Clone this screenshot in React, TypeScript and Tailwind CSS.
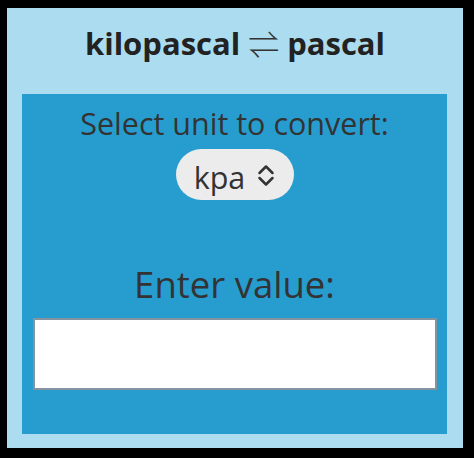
import React, { useState } from "react";

const font = { fontFamily: '"Open Sans", "Noto Sans", sans-serif' };

const Chevrons = () => (
  <svg width="18" height="23" viewBox="0 0 18 23" fill="none" stroke="#333" strokeWidth="2.5" strokeLinecap="round" strokeLinejoin="round">
    <path d="M2.5 9 9 2.5 15.5 9" />
    <path d="M2.5 14 9 20.5 15.5 14" />
  </svg>
);

export default function App() {
  const [value, setValue] = useState("");

  return (
    <div className="w-[474px] h-[458px] bg-black pt-[8px] pl-[7px]" style={font}>
      <div className="w-[456px] h-[440px] bg-[#acdcf0] flex flex-col">
        <h1 className="h-[86px] pt-[14px] flex justify-center text-[31px] leading-[42px] font-bold text-[#222]">
          kilopascal
          <span className="mx-[8px] font-light text-[#333] font-['Noto_Sans_CJK_JP',sans-serif]">⇌</span>
          pascal
        </h1>
        <div className="ml-[15px] w-[425px] h-[340px] bg-[#279dcf] flex flex-col items-center text-[#333]">
          <p className="mt-[9px] text-[30.5px] leading-[40px]">Select unit to convert:</p>
          <div className="mt-[6px] h-[51px] w-[118px] rounded-full bg-[#ececec] flex items-center justify-center gap-[12px] text-[30.5px] leading-[40px]">
            <span className="pt-[5px]">kpa</span>
            <span className="pt-[2px]">
              <Chevrons />
            </span>
          </div>
          <p className="mt-[60px] text-[36.5px] leading-[48px]">Enter value:</p>
          <input
            value={value}
            onChange={(e) => setValue(e.target.value)}
            className="mt-[10px] w-[404px] h-[72px] bg-white border-2 border-[#8593a0] outline-none px-2 text-[24px]"
          />
        </div>
      </div>
    </div>
  );
}
